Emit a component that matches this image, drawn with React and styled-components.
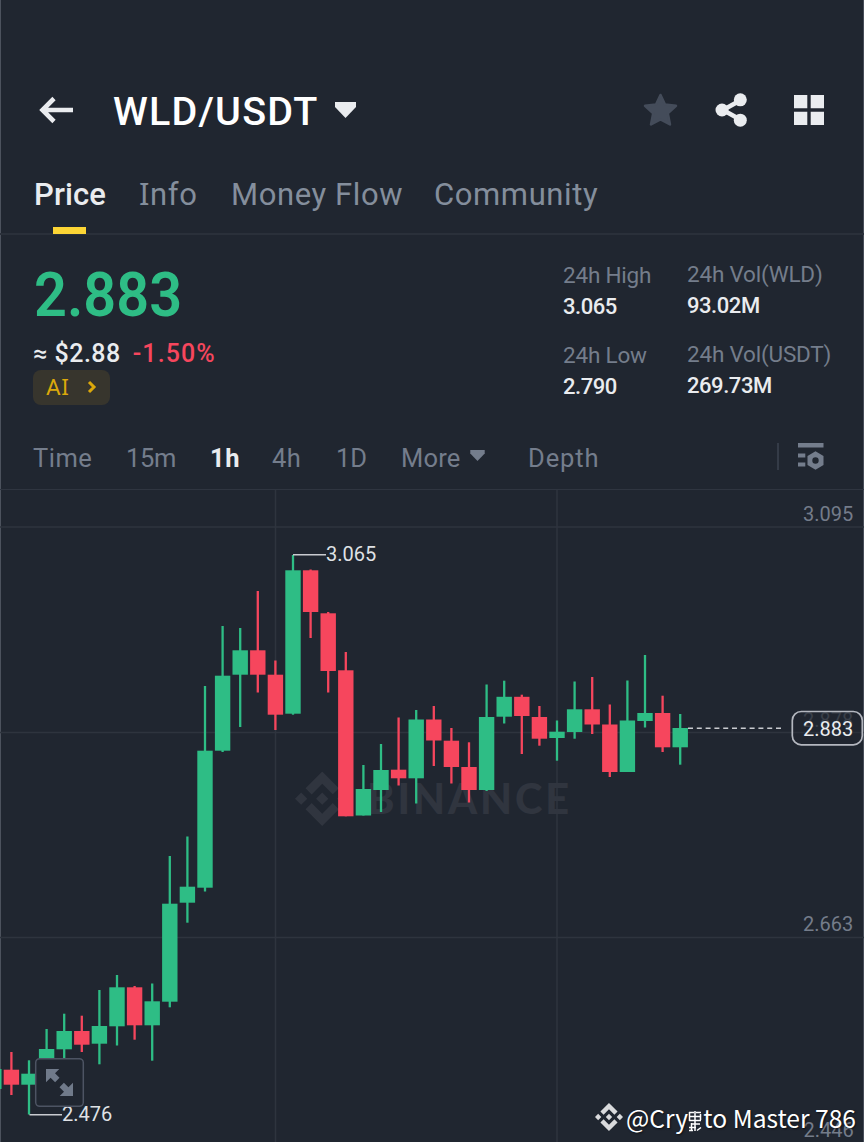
import React from "react";
import styled, { createGlobalStyle } from "styled-components";
import { SiBinance } from "react-icons/si";

const GlobalStyle = createGlobalStyle`
  body {
    margin: 0;
    background: #202630;
  }
`;
const Screen = styled.div`
  position: relative;
  display: flex;
  flex-direction: column;
  box-sizing: border-box;
  width: 864px;
  height: 1142px;
  overflow: hidden;
  background: #202630;
  box-shadow: inset 1px 0 #4c525d, inset -1px 0 #474d58;
  color: #eaecef;
  font-family: Roboto, "Liberation Sans", sans-serif;
  white-space: nowrap;
`;
const Header = styled.header`
  display: flex;
  align-items: center;
  height: 64px;
  padding: 78px 38px 0 39px;
`;
const Pair = styled.h1`
  margin: 4px 16px 0 39px;
  width: 206px;
  font-size: 39.5px;
  font-weight: 500;
  line-height: 48px;
  letter-spacing: 1.2px;
  color: #fff;
`;
const Actions = styled.div`
  display: flex;
  align-items: center;
  margin-left: auto;
`;
const Tabs = styled.nav`
  display: grid;
  grid-template-columns: 105px 92px 203px auto;
  box-sizing: border-box;
  height: 93px;
  padding: 33px 0 0 34px;
  border-bottom: 2px solid #2a303a;
`;
const Tab = styled.div`
  font-size: 31px;
  line-height: 40px;
  letter-spacing: ${(props) => (props.$active ? "0.1px" : "0.6px")};
  font-weight: ${(props) => (props.$active ? 500 : 400)};
  color: ${(props) => (props.$active ? "#eaecef" : "#848e9c")};
  &::after {
    content: "";
    display: ${(props) => (props.$active ? "block" : "none")};
    width: 33px;
    height: 7px;
    margin: 12px 0 0 19px;
    background: #fcd535;
  }
`;
const SerifCap = styled.span`
  font-family: "Noto Sans", sans-serif;
  line-height: 1;
`;
const Summary = styled.section`
  display: flex;
  justify-content: space-between;
  box-sizing: border-box;
  height: 190px;
  padding: 25px 0 0 33px;
`;
const LastPrice = styled.div`
  margin-left: 1px;
  font-size: 62px;
  font-weight: 600;
  line-height: 70px;
  color: #2ebd85;
  transform: scaleX(0.93);
  transform-origin: left;
`;
const Converted = styled.div`
  display: flex;
  gap: 12px;
  margin-top: 9px;
  font-size: 25px;
  font-weight: 500;
  line-height: 30px;
  letter-spacing: 0.5px;
`;
const Change = styled.span`
  color: #f6465d;
  letter-spacing: 1.1px;
`;
const AiBadge = styled.div`
  display: flex;
  align-items: center;
  justify-content: space-between;
  box-sizing: border-box;
  width: 77px;
  height: 35px;
  margin-top: 1px;
  padding: 0 13px;
  border-radius: 8px;
  background: #37352d;
  color: #dca80b;
  font-size: 22.5px;
  line-height: 32px;
  letter-spacing: 0.5px;
`;
const Stats = styled.div`
  display: grid;
  grid-template-columns: 124px 177px;
`;
const StatColumn = styled.div`
  display: flex;
  flex-direction: column;
  gap: 18px;
  margin-top: ${(props) => props.$shift}px;
`;
const StatLabel = styled.div`
  font-size: 22.5px;
  line-height: 31px;
  letter-spacing: -0.2px;
  color: #747d8b;
`;
const StatValue = styled.div`
  font-size: 22px;
  font-weight: 500;
  line-height: 31px;
  letter-spacing: -0.45px;
`;
const Intervals = styled.div`
  display: grid;
  grid-template-columns: 93px 84px 62px 64px 65px 127px 249px auto;
  align-items: center;
  box-sizing: border-box;
  height: 66px;
  padding: 2px 0 0 33px;
  border-bottom: 1px solid #2f3540;
`;
const Interval = styled.div`
  display: flex;
  align-items: center;
  gap: 9px;
  font-size: 25.5px;
  line-height: 32px;
  letter-spacing: ${(props) => props.$spacing ?? 0.5}px;
  font-weight: ${(props) => (props.$active ? 700 : 400)};
  color: ${(props) => (props.$active ? "#eaecef" : "#747d8c")};
  & svg {
    margin-bottom: 5px;
  }
`;
const Settings = styled.div`
  display: flex;
  align-items: center;
  gap: 19px;
  margin-top: -3px;
`;
const Divider = styled.div`
  width: 2px;
  height: 27px;
  background: #343b47;
`;
const Chart = styled.svg`
  display: block;
  flex: none;
  font-size: 20px;
`;
const Signature = styled.div`
  position: absolute;
  right: 8px;
  bottom: 7px;
  display: flex;
  align-items: center;
  gap: 3px;
  color: #fff;
  font-family: "Noto Sans CJK SC", sans-serif;
  font-size: 24.6px;
  line-height: 36px;
  text-shadow: 1px 1px 2px rgba(0, 0, 0, 0.6);
`;
const Garbled = styled.span`
  position: relative;
  color: transparent;
  text-shadow: none;
  & svg {
    position: absolute;
    left: 0;
    top: 12px;
  }
`;

const GRID = "#2e343e";
const UP = "#2ebd85";
const DOWN = "#f6465d";

// [slot, high, body top, body bottom, low, colour]
const candles = [
  [-17, 1069, 1069, 1089, 1089, UP],
  [-16, 1052, 1069.7, 1084.7, 1095, DOWN],
  [-15, 1060.3, 1073.7, 1084.7, 1114.5, UP],
  [-14, 1029, 1049, 1075, 1080, UP],
  [-13, 1013.7, 1031, 1049.3, 1065, UP],
  [-12, 1015.7, 1031, 1044.7, 1052, DOWN],
  [-11, 990, 1026, 1043.7, 1064.3, UP],
  [-10, 975, 987.3, 1026.3, 1045.5, UP],
  [-9, 986, 987.3, 1025.3, 1039.7, DOWN],
  [-8, 983.5, 1001.3, 1025.3, 1060.7, UP],
  [-7, 856, 903.7, 1001.7, 1007.3, UP],
  [-6, 836.5, 886.7, 902.7, 922.7, UP],
  [-5, 686, 750.7, 887.7, 891.5, UP],
  [-4, 626, 675.7, 750.7, 752, UP],
  [-3, 628, 650.3, 674.7, 727, UP],
  [-2, 591, 650.3, 674.7, 692.5, DOWN],
  [-1, 660.5, 674.7, 714.7, 730, DOWN],
  [0, 555, 570.3, 713.7, 714.7, UP],
  [1, 569.5, 570.3, 612, 638, DOWN],
  [2, 612, 613.3, 671, 692.5, DOWN],
  [3, 652, 670.3, 816.3, 816.3, DOWN],
  [4, 765, 789, 815.5, 815.5, UP],
  [5, 744, 770, 790, 812, UP],
  [6, 717.5, 769.7, 778.3, 785.5, DOWN],
  [7, 710, 719.5, 778.3, 803.5, UP],
  [8, 706, 719.5, 740.5, 766, DOWN],
  [9, 728, 740.7, 767, 783.5, DOWN],
  [10, 742.3, 767, 790, 802.5, DOWN],
  [11, 684.5, 717, 790, 791, UP],
  [12, 680.7, 696.8, 716.7, 723.5, UP],
  [13, 694.7, 696.8, 716, 754, DOWN],
  [14, 706, 717, 738.7, 745.7, DOWN],
  [15, 720.5, 731.7, 738, 760.7, UP],
  [16, 681.5, 709.3, 732, 738.7, UP],
  [17, 677, 709.3, 724.5, 734, DOWN],
  [18, 704.5, 724.5, 772, 777, DOWN],
  [19, 680.5, 720.5, 772, 772, UP],
  [20, 655, 713, 721, 727.5, UP],
  [21, 695.7, 713, 747.3, 752, DOWN],
  [22, 714, 728, 747.3, 764.7, UP],
];

const Candle = ({ candle }) => {
  const [slot, high, top, bottom, low, color] = candle;
  const x = 293 + slot * 17.6;
  return (
    <g fill={color}>
      <rect x={x - 1.15} y={high} width="2.3" height={low - high} />
      <rect x={x - 7.7} y={top} width="15.4" height={bottom - top} />
    </g>
  );
};

const Caret = ({ width, height, color }) => (
  <svg width={width} height={height} viewBox="0 0 21 16" fill={color}>
    <path d="M0 0h21v5L10.5 16 0 5z" />
  </svg>
);

const CandleChart = () => (
  <Chart width="864" height="652" viewBox="0 490 864 652">
    <g stroke={GRID} strokeWidth="1.5">
      <path d="M0 527H864M0 732.5H864M0 937.5H864M275.5 490V1142M557 490V1142" />
    </g>
    <g fill="#30353f">
      <SiBinance x="295" y="771.5" size="54.5" color="#30353f" />
      <text
        x="367"
        y="814"
        fontFamily="Lato"
        fontWeight="900"
        fontSize="41.5"
        textLength="202"
      >
        BINANCE
      </text>
    </g>
    {candles.map((candle) => (
      <Candle key={candle[0]} candle={candle} />
    ))}
    <g stroke="#c9cbd0" strokeWidth="1.5" fill="none">
      <path d="M293 554.8H326M29.5 1114.7H62" />
      <path d="M688 728.3H781" strokeDasharray="5 3.8" />
    </g>
    <g fill="#dfe1e5">
      <text x="326" y="561">3.065</text>
      <text x="62" y="1121">2.476</text>
    </g>
    <g fill="#747c8a">
      <text x="803" y="521">3.095</text>
      <text x="803" y="931">2.663</text>
      <text x="803.5" y="1137">2.446</text>
    </g>
    <text x="803" y="727" fill="#454b55">2.878</text>
    <rect
      x="792.3"
      y="711.5"
      width="70"
      height="33.3"
      rx="9"
      fill="#202630"
      fillOpacity="0.3"
      stroke="#b4b7bf"
      strokeWidth="1.7"
    />
    <text x="803" y="736" fill="#eaecef">2.883</text>
    <rect
      x="35.7"
      y="1058.7"
      width="47.6"
      height="47.6"
      rx="4"
      fill="#202630"
      stroke="#4d5463"
      strokeWidth="1.5"
    />
    <g fill="#707a8a">
      <path d="M46 1069h13.3l-4.3 4.3 4.5 4.5-4.4 4.4-4.5-4.5-4.6 4.6z" />
      <path d="M73 1096H59.7l4.3-4.3-4.5-4.5 4.4-4.4 4.5 4.5 4.6-4.6z" />
    </g>
  </Chart>
);

const App = () => {
  return (
    <>
      <GlobalStyle />
      <Screen>
        <Header>
          <svg width="35" height="28" viewBox="0 0 35 28" fill="none">
            <path
              d="M15 2.5L3.5 14 15 25.500M4 14H34"
              stroke="#eaecef"
              strokeWidth="4.6"
            />
          </svg>
          <Pair>WLD/USDT</Pair>
          <Caret width={21} height={16} color="#eaecef" />
          <Actions>
            <svg width="35" height="36" viewBox="0 0 35 36">
              <path
                d="M17.5 3l4.500 9.500 11 1.300-8.200 7.400 2.200 11.300-9.500-5-9.500 5 2.200-11.300L2 13.800l11-1.300z"
                fill="#444c5a"
                stroke="#444c5a"
                strokeWidth="2.5"
                strokeLinejoin="round"
              />
            </svg>
            <svg
              width="72"
              height="36"
              viewBox="-36 0 72 36"
              fill="#eaecef"
            >
              <path
                d="M27 8L9 18l18 10"
                stroke="#eaecef"
                strokeWidth="4.5"
                fill="none"
              />
              <circle cx="8" cy="18" r="6.5" />
              <circle cx="26.3" cy="7.800" r="6.5" />
              <circle cx="26.3" cy="28.2" r="6.5" />
            </svg>
            <svg
              width="76"
              height="36"
              viewBox="-40 0 76 36"
              fill="#eaecef"
            >
              <path d="M4 3h13.3v13.300H4zM20.7 3H34v13.300H20.7zM4 19.700h13.300V33H4zM20.7 19.700H34V33H20.700z" />
            </svg>
          </Actions>
        </Header>
        <Tabs>
          <Tab $active>Price</Tab>
          <Tab>
            <SerifCap>I</SerifCap>nfo
          </Tab>
          <Tab>Money Flow</Tab>
          <Tab>Community</Tab>
        </Tabs>
        <Summary>
          <div>
            <LastPrice>2.883</LastPrice>
            <Converted>
              <span>≈ $2.88</span>
              <Change>-1.50%</Change>
            </Converted>
            <AiBadge>
              <span>
                A<SerifCap>I</SerifCap>
              </span>
              <svg width="10" height="14" viewBox="0 0 10 14" fill="none">
                <path d="M2 2l5 5-5 5" stroke="#dca80b" strokeWidth="3" />
              </svg>
            </AiBadge>
          </div>
          <Stats>
            <StatColumn $shift={0}>
              <div>
                <StatLabel>24h High</StatLabel>
                <StatValue>3.065</StatValue>
              </div>
              <div>
                <StatLabel>24h Low</StatLabel>
                <StatValue>2.790</StatValue>
              </div>
            </StatColumn>
            <StatColumn $shift={-1}>
              <div>
                <StatLabel>24h Vol(WLD)</StatLabel>
                <StatValue>93.02M</StatValue>
              </div>
              <div>
                <StatLabel>24h Vol(USDT)</StatLabel>
                <StatValue>269.73M</StatValue>
              </div>
            </StatColumn>
          </Stats>
        </Summary>
        <Intervals>
          <Interval>Time</Interval>
          <Interval $spacing={-0.3}>15m</Interval>
          <Interval $active>1h</Interval>
          <Interval>4h</Interval>
          <Interval $spacing={0}>1D</Interval>
          <Interval $spacing={0.2}>
            More <Caret width={15} height={11} color="#747d8c" />
          </Interval>
          <Interval $spacing={0.9}>Depth</Interval>
          <Settings>
            <Divider />
            <svg width="26" height="28" viewBox="0 0 26 28" fill="#747d8c">
              <path d="M0 1h25.500v4.500H0zM0 11.500h7.300v4H0zM0 20.500h7.300v4H0z" />
              <path
                fillRule="evenodd"
                d="M17.500 9.300l8 4.600v9.200l-8 4.600-8-4.600v-9.200zm0 6a3.200 3.200 0 100 6.400 3.200 3.200 0 000-6.400z"
              />
            </svg>
          </Settings>
        </Intervals>
        <CandleChart />
        <Signature>
          <SiBinance size={28} color="#d9dadc" />
          <span>
            @Cry
            <Garbled>
              p
              <svg width="14" height="21" viewBox="0 0 14 21" fill="none">
                <path
                  d="M1 1.5h5M8 1.5h5M1.500 1v9M12.500 3v6M7 0v20M2 5.500h10M1 9.500h12M3 13h9M1 16.500h7M3.500 12v7M1 19.500h4M9 19.500l4-3"
                  stroke="#fff"
                  strokeWidth="1.5"
                />
              </svg>
            </Garbled>
            to Master 786
          </span>
        </Signature>
      </Screen>
    </>
  );
};
export default App;
